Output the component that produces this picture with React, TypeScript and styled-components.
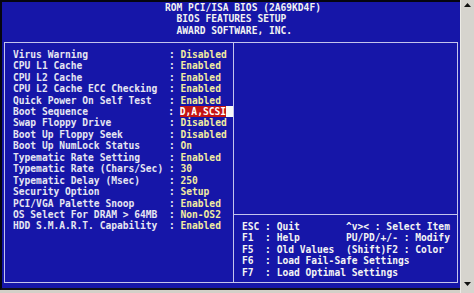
import React from 'react'
import styled, { createGlobalStyle } from 'styled-components'

const GlobalStyle = createGlobalStyle`
  html, body {
    margin: 0;
    padding: 0;
    background: #d4d0c8;
  }
  #root {
    width: 474px;
    height: 293px;
  }
`

const BLUE = '#1616a8'
const FRAME_LINE = '#c4c4ec'
const LINE_H = 11.45

const Frame = styled.div`
  display: flex;
  width: 474px;
  height: 293px;
  overflow: hidden;
  background: #d4d0c8;
`

const Viewport = styled.div`
  flex: 1;
  display: flex;
  flex-direction: column;
  border-top: 2px solid #050510;
  border-left: 2px solid #050510;
  border-bottom: 2px solid #101018;
  margin-bottom: 3px;
`

const Console = styled.div`
  flex: 1;
  display: flex;
  flex-direction: column;
  background: ${BLUE};
  padding: 0 2px 5px 2px;
  font-family: 'DejaVu Sans Mono', 'Liberation Mono', monospace;
  font-weight: bold;
  font-size: 9.6px;
  line-height: ${LINE_H}px;
  color: #ececf4;
`

const Header = styled.div`
  padding-left: 161px;
  margin-bottom: 5.5px;
  white-space: pre;
  color: #f2f2f2;
`

const Box = styled.div`
  flex: 1;
  display: flex;
  border: 1px solid ${FRAME_LINE};
`

const SettingsPane = styled.div`
  width: 229px;
  padding: 6px 0 0 8px;
  box-sizing: border-box;
  border-right: 1px solid ${FRAME_LINE};
`

const SidePane = styled.div`
  flex: 1;
  display: flex;
  flex-direction: column;
`

const ItemHelp = styled.div`
  flex: 1;
`

const KeyHelp = styled.div`
  border-top: 1px solid ${FRAME_LINE};
  padding: 5.5px 0 4px 8px;
  white-space: pre;
  color: #f4f4f4;
`

const Row = styled.div`
  display: flex;
  height: ${LINE_H}px;
  white-space: pre;
`

const Label = styled.span`
  width: 27ch;
  color: #e6e6f2;
`

const Colon = styled.span`
  width: 2ch;
  color: #e6e6f2;
`

const Value = styled.span<{ $selected?: boolean }>`
  color: ${({ $selected }) => ($selected ? '#ffffff' : '#f2eca0')};
  background: ${({ $selected }) => ($selected ? '#c41414' : 'transparent')};
`

const Cursor = styled.span`
  width: 7px;
  background: #f8f8f8;
`

const HelpRow = styled.div`
  display: flex;
  height: ${LINE_H}px;
`

const HelpCol = styled.span<{ $w: number }>`
  width: ${({ $w }) => $w}ch;
`

const Scrollbar = styled.div`
  width: 13px;
  display: flex;
  flex-direction: column;
  justify-content: space-between;
  align-items: center;
  padding: 3px 0 7px 0;
  background: #d6d4ce;
  border-left: 1px solid #ecebe6;
`

const Arrow = styled.svg`
  display: block;
  width: 7px;
  height: 4px;
`

const settings: { label: string; value: string; selected?: boolean }[] = [
  { label: 'Virus Warning', value: 'Disabled' },
  { label: 'CPU L1 Cache', value: 'Enabled' },
  { label: 'CPU L2 Cache', value: 'Enabled' },
  { label: 'CPU L2 Cache ECC Checking', value: 'Enabled' },
  { label: 'Quick Power On Self Test', value: 'Enabled' },
  { label: 'Boot Sequence', value: 'D,A,SCSI', selected: true },
  { label: 'Swap Floppy Drive', value: 'Disabled' },
  { label: 'Boot Up Floppy Seek', value: 'Disabled' },
  { label: 'Boot Up NumLock Status', value: 'On' },
  { label: 'Typematic Rate Setting', value: 'Enabled' },
  { label: 'Typematic Rate (Chars/Sec)', value: '30' },
  { label: 'Typematic Delay (Msec)', value: '250' },
  { label: 'Security Option', value: 'Setup' },
  { label: 'PCI/VGA Palette Snoop', value: 'Enabled' },
  { label: 'OS Select For DRAM > 64MB', value: 'Non-OS2' },
  { label: 'HDD S.M.A.R.T. Capability', value: 'Enabled' }
]

const keys: [string, string, string?][] = [
  ['ESC', 'Quit', '^v>< : Select Item'],
  ['F1', 'Help', 'PU/PD/+/- : Modify'],
  ['F5', 'Old Values', '(Shift)F2 : Color'],
  ['F6', 'Load Fail-Safe Settings'],
  ['F7', 'Load Optimal Settings']
]

export default function App() {
  return (
    <Frame>
      <GlobalStyle />
      <Viewport>
        <Console>
          <Header>
            {'ROM PCI/ISA BIOS (2A69KD4F)\n  BIOS FEATURES SETUP\n  AWARD SOFTWARE, INC.'}
          </Header>
          <Box>
            <SettingsPane>
              {settings.map(s => (
                <Row key={s.label}>
                  <Label>{s.label}</Label>
                  <Colon>:</Colon>
                  <Value $selected={s.selected}>{s.value}</Value>
                  {s.selected && <Cursor />}
                </Row>
              ))}
            </SettingsPane>
            <SidePane>
              <ItemHelp />
              <KeyHelp>
                {keys.map(([key, action, extra]) => (
                  <HelpRow key={key}>
                    <HelpCol $w={4}>{key}</HelpCol>
                    <HelpCol $w={2}>:</HelpCol>
                    <HelpCol $w={extra ? 12 : 30}>{action}</HelpCol>
                    {extra && <span>{extra}</span>}
                  </HelpRow>
                ))}
              </KeyHelp>
            </SidePane>
          </Box>
        </Console>
      </Viewport>
      <Scrollbar>
        <Arrow viewBox="0 0 7 4">
          <path d="M3.5 0L7 4H0Z" fill="#111" />
        </Arrow>
        <Arrow viewBox="0 0 7 4">
          <path d="M0 0H7L3.5 4Z" fill="#111" />
        </Arrow>
      </Scrollbar>
    </Frame>
  )
}
